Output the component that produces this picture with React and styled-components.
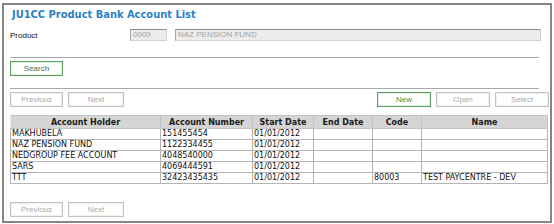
import React from 'react';
import styled, { createGlobalStyle } from 'styled-components';

const GlobalStyle = createGlobalStyle`
  body {
    margin: 0;
    background: #ffffff;
    font-family: "Liberation Sans", Arial, sans-serif;
  }
`;

const Frame = styled.div`
  box-sizing: border-box;
  width: 550px;
  height: 220px;
  margin: 3px 0 0 2px;
  border: 2px solid #858585;
  padding: 0 1px 0 6px;
  display: flex;
  flex-direction: column;
`;

const Title = styled.h1`
  margin: 2px 0 0 2px;
  height: 16px;
  line-height: 16px;
  font-family: "DejaVu Sans Condensed", "DejaVu Sans", Verdana, sans-serif;
  font-stretch: condensed;
  font-size: 11px;
  font-weight: bold;
  color: #2a7fc4;
`;

const FieldRow = styled.div`
  display: flex;
  align-items: center;
  margin-top: 6px;
  height: 12px;
`;

const Label = styled.span`
  width: 120px;
  font-size: 8px;
  color: #111;
`;

const Input = styled.div`
  box-sizing: border-box;
  width: ${p => p.$w}px;
  height: 12px;
  margin-right: 8px;
  padding: 0 2px;
  background: #ececec;
  border: 1px solid #d2d2d2;
  border-top-color: #8c8c8c;
  border-left-color: #a8a8a8;
  font-size: 8px;
  line-height: 10px;
  color: #a4a4a4;
`;

const Divider = styled.div`
  width: 529px;
  height: 1px;
  background: #a9a9a9;
  margin-top: ${p => p.$mt}px;
`;

const Button = styled.button`
  box-sizing: border-box;
  width: ${p => p.$w || 54}px;
  height: 15px;
  padding: 0;
  background: #ffffff;
  font-family: "Liberation Sans", Arial, sans-serif;
  font-size: 8px;
  border: 1px solid ${p => (p.$active ? '#5e9e5e' : '#c2c2c2')};
  box-shadow: inset 0 0 0 1px ${p => (p.$active ? '#e4f1e4' : '#f0f0f0')};
  color: ${p => (p.$active ? p.$fg || '#3f8f3f' : '#a9a9a9')};
`;

const Toolbar = styled.div`
  display: flex;
  justify-content: space-between;
  margin-top: ${p => p.$mt}px;
`;

const Group = styled.div`
  display: flex;
  gap: 5px;
`;

const Table = styled.table`
  margin-top: 8px;
  width: 537px;
  table-layout: fixed;
  border-collapse: collapse;
  border: 1px solid #a6a6a6;
  font-family: "DejaVu Sans", Verdana, sans-serif;
  font-size: 8px;
`;

const Th = styled.th`
  height: 12px;
  padding: 0;
  background: #d5d5d5;
  border: 1px solid #c4c4c4;
  border-left-color: #ececec;
  font-weight: bold;
  color: #1a1a1a;
  text-align: center;
  line-height: 11px;
`;

const Td = styled.td`
  height: 10px;
  padding: 0 1px;
  border: 1px solid #b4b4b4;
  color: #111;
  line-height: 10px;
  white-space: nowrap;
  overflow: hidden;
`;

const columns = [
  { name: 'Account Holder', w: 150 },
  { name: 'Account Number', w: 92 },
  { name: 'Start Date', w: 61 },
  { name: 'End Date', w: 59 },
  { name: 'Code', w: 49 },
  { name: 'Name', w: 126 },
];

const rows = [
  ['MAKHUBELA', '151455454', '01/01/2012', '', '', ''],
  ['NAZ PENSION FUND', '1122334455', '01/01/2012', '', '', ''],
  ['NEDGROUP FEE ACCOUNT', '4048540000', '01/01/2012', '', '', ''],
  ['SARS', '4069444591', '01/01/2012', '', '', ''],
  ['TTT', '32423435435', '01/01/2012', '', '80003', 'TEST PAYCENTRE - DEV'],
];

const App = () => {
  return (
    <>
      <GlobalStyle />
      <Frame>
        <Title>JU1CC Product Bank Account List</Title>
        <FieldRow>
          <Label>Product</Label>
          <Input $w={37}>0009</Input>
          <Input $w={366}>NAZ PENSION FUND</Input>
        </FieldRow>
        <Divider $mt={16} />
        <Toolbar $mt={3}>
          <Button $active $fg="#4b6e4b" $w={53}>Search</Button>
        </Toolbar>
        <Divider $mt={12} />
        <Toolbar $mt={3}>
          <Group>
            <Button $w={53}>Previous</Button>
            <Button $w={56}>Next</Button>
          </Group>
          <Group>
            <Button $active>New</Button>
            <Button>Open</Button>
            <Button>Select</Button>
          </Group>
        </Toolbar>
        <Table>
          <colgroup>
            {columns.map(c => (
              <col key={c.name} style={{ width: c.w }} />
            ))}
          </colgroup>
          <thead>
            <tr>
              {columns.map(c => (
                <Th key={c.name}>{c.name}</Th>
              ))}
            </tr>
          </thead>
          <tbody>
            {rows.map(r => (
              <tr key={r[0]}>
                {r.map((v, i) => (
                  <Td key={i}>{v}</Td>
                ))}
              </tr>
            ))}
          </tbody>
        </Table>
        <Toolbar $mt={18}>
          <Group>
            <Button $w={53}>Previous</Button>
            <Button $w={56}>Next</Button>
          </Group>
        </Toolbar>
      </Frame>
    </>
  );
};

export default App;
